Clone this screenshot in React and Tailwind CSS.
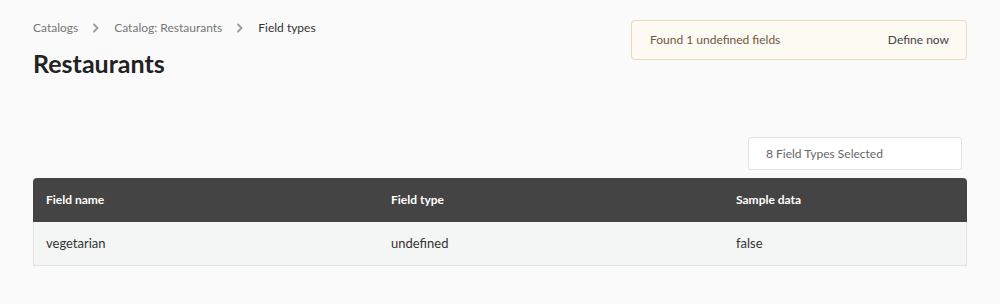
export default function App() {
  const font = { fontFamily: 'Lato, "Open Sans", sans-serif' };
  const Chevron = () => (
    <svg width="8" height="10" viewBox="0 0 8 10" className="mx-[14px]" fill="none">
      <path d="M2 1.5 L5.5 5 L2 8.5" stroke="#9a9a9a" strokeWidth="1.8" strokeLinecap="round" strokeLinejoin="round" />
    </svg>
  );
  return (
    <div className="w-[1000px] h-[304px] bg-[#fafafa] px-[33px] pt-[20px]" style={font}>
      <div className="flex justify-between items-start">
        <div className="flex flex-col">
          <div className="flex items-center text-[12px] leading-[16px]">
            <span className="text-[#777]">Catalogs</span>
            <Chevron />
            <span className="text-[#777]">Catalog: Restaurants</span>
            <Chevron />
            <span className="text-[#333]">Field types</span>
          </div>
          <h1 className="text-[25px] leading-[30px] font-bold text-[#222] mt-[12px]">Restaurants</h1>
        </div>
        <div className="w-[336px] h-[40px] bg-[#fdf9f3] border border-[#ead9bf] rounded-[4px] flex items-center justify-between pl-[18px] pr-[17px] text-[12px] text-[#6b5a3f]">
          <span>Found 1 undefined fields</span>
          <span className="text-[#444]">Define now</span>
        </div>
      </div>
      <div className="flex justify-end mt-[59px] pr-[5px]">
        <div className="w-[214px] h-[33px] bg-white border border-[#e3e3e3] rounded-[3px] flex items-center pl-[17px] text-[12px] text-[#666]">
          8 Field Types Selected
        </div>
      </div>
      <div className="mt-[8px] w-[934px]">
        <div className="flex h-[44px] items-center bg-[#444444] rounded-t-[4px] text-white text-[12px] font-bold">
          <div className="w-[358px] pl-[13px]">Field name</div>
          <div className="w-[345px]">Field type</div>
          <div className="flex-1">Sample data</div>
        </div>
        <div className="flex h-[44px] items-center bg-[#f4f6f5] border border-t-0 border-[#e2e2e2] text-[13px] text-[#333]">
          <div className="w-[357px] pl-[12px]">vegetarian</div>
          <div className="w-[345px]">undefined</div>
          <div className="flex-1">false</div>
        </div>
      </div>
    </div>
  );
}
